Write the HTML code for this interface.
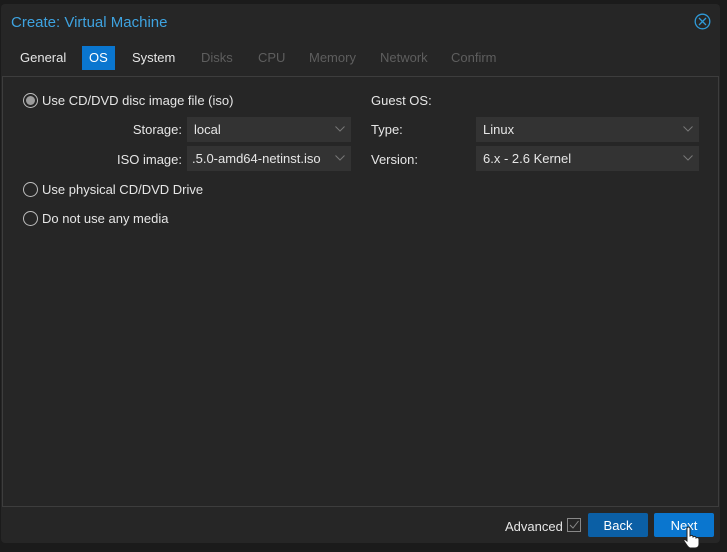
<!DOCTYPE html>
<html><head><style>
body{margin:0;width:727px;height:552px;background:#1b1b1b;font-family:"Liberation Sans",sans-serif;font-size:13px;color:#e6e6e6;position:relative;overflow:hidden}
.dlg{position:absolute;left:1px;top:4px;width:719px;height:539px;background:#262626;border-radius:4px}
.title{position:absolute;left:11px;top:14px;font-size:15px;color:#3ea3e0}
.close{position:absolute;left:694px;top:13px}
.tab{position:absolute;top:46px;height:24px;line-height:24px;padding:0 7px;font-size:13px}
.dis{color:#5e5e5e}
.panel{position:absolute;left:2px;top:76px;width:715px;height:429px;border:1px solid #3d3d3d;background:#262626}
.a{position:absolute}
.radio{position:absolute;width:13px;height:13px;border:1px solid #bdbdbd;border-radius:50%}
.radio.on::after{content:"";position:absolute;left:2px;top:2px;width:9px;height:9px;border-radius:50%;background:#9c9c9c}
.sel{position:absolute;height:25px;background:#333;line-height:25px;padding-left:7px;box-sizing:border-box}
.sel svg{position:absolute;right:6px;top:9px}
.lbl{position:absolute;text-align:right}
.btn{position:absolute;top:513px;height:24px;line-height:26px;text-align:center;border-radius:2px;color:#fff}
</style></head><body>
<div class="dlg"></div>
<div class="title">Create: Virtual Machine</div>
<svg class="close" width="17" height="17" viewBox="0 0 17 17"><circle cx="8.5" cy="8.5" r="7.3" fill="none" stroke="#2f9ad8" stroke-width="1.3"/><path d="M5 5L12 12M12 5L5 12" stroke="#2f9ad8" stroke-width="1.3"/></svg>
<div class="tab" style="left:13px">General</div>
<div class="tab" style="left:82px;background:#0a76cf;color:#fff">OS</div>
<div class="tab" style="left:125px">System</div>
<div class="tab dis" style="left:194px">Disks</div>
<div class="tab dis" style="left:251px">CPU</div>
<div class="tab dis" style="left:302px">Memory</div>
<div class="tab dis" style="left:373px">Network</div>
<div class="tab dis" style="left:444px">Confirm</div>
<div class="panel"></div>
<div class="radio on" style="left:23px;top:93px"></div>
<div class="a" style="left:42px;top:93px">Use CD/DVD disc image file (iso)</div>
<div class="lbl" style="left:100px;width:82px;top:122px">Storage:</div>
<div class="sel" style="left:187px;top:117px;width:164px">local<svg width="10" height="6"><path d="M0.5 0.5L5 5L9.5 0.5" fill="none" stroke="#777"/></svg></div>
<div class="lbl" style="left:100px;width:82px;top:152px">ISO image:</div>
<div class="sel" style="left:187px;top:146px;width:164px;padding-left:5px">.5.0-amd64-netinst.iso<svg width="10" height="6"><path d="M0.5 0.5L5 5L9.5 0.5" fill="none" stroke="#777"/></svg></div>
<div class="radio" style="left:23px;top:182px"></div>
<div class="a" style="left:42px;top:182px">Use physical CD/DVD Drive</div>
<div class="radio" style="left:23px;top:211px"></div>
<div class="a" style="left:42px;top:211px">Do not use any media</div>
<div class="a" style="left:371px;top:93px">Guest OS:</div>
<div class="a" style="left:371px;top:122px">Type:</div>
<div class="sel" style="left:476px;top:117px;width:223px">Linux<svg width="10" height="6"><path d="M0.5 0.5L5 5L9.5 0.5" fill="none" stroke="#777"/></svg></div>
<div class="a" style="left:371px;top:152px">Version:</div>
<div class="sel" style="left:476px;top:146px;width:223px">6.x - 2.6 Kernel<svg width="10" height="6"><path d="M0.5 0.5L5 5L9.5 0.5" fill="none" stroke="#777"/></svg></div>
<div class="a" style="left:505px;top:519px">Advanced</div>
<svg class="a" style="left:567px;top:518px" width="14" height="14"><rect x="0.5" y="0.5" width="13" height="13" fill="none" stroke="#888"/><path d="M3 7L6 10L11.5 3" fill="none" stroke="#888"/></svg>
<div class="btn" style="left:588px;width:60px;background:#0b5fa5">Back</div>
<div class="btn" style="left:654px;width:60px;background:#0a76cf">Next</div>
<svg class="a" style="left:682px;top:526px" width="20" height="24" viewBox="0 0 20 24"><path d="M5 2.5Q5 1 6.5 1Q8 1 8 2.5V10L9 9.5Q11 9 11 11L12 10.5Q14 10 14 12L15 11.5Q17 11.5 17 13.5V18Q17 22 13 22H9Q7 22 5.5 20L2 15Q1.5 13.5 3 13.5L5 15Z" fill="#fff" stroke="#222" stroke-width="1"/></svg>
</body></html>
